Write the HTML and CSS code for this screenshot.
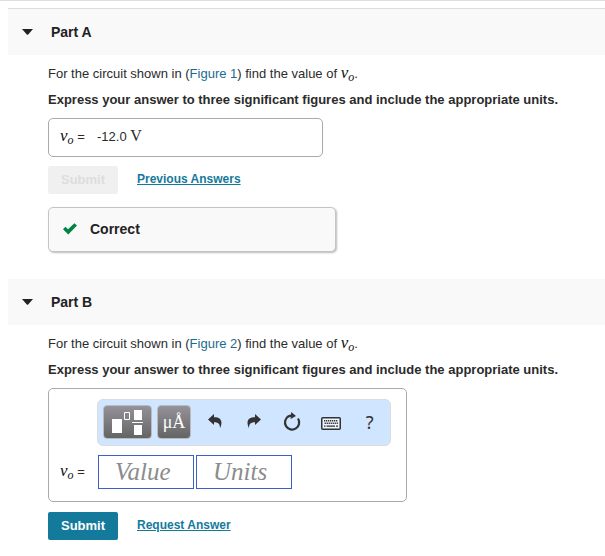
FILE: index.html
```html
<!DOCTYPE html>
<html lang="en">
<head>
<meta charset="utf-8">
<title>Circuit problem</title>
<link rel="stylesheet" href="styles.css">
</head>
<body>
<main class="problem">
  <section class="part">
    <h2 class="part-header part-header-first">
      <button class="toggle" type="button" aria-expanded="true">
        <svg class="caret" viewBox="0 0 11 6" aria-hidden="true"><path d="M0 0H11L6.2 5.5Q5.5 6 4.8 5.5Z"/></svg>
        <span>Part A</span>
      </button>
    </h2>
    <div class="part-body">
      <p class="line">For the circuit shown in (<a class="figure" href="#figure1">Figure 1</a>) find the value of <i class="var">v<sub>o</sub></i>.</p>
      <p class="line instruction">Express your answer to three significant figures and include the appropriate units.</p>
      <div class="answer answer-done">
        <span class="lhs"><i class="var">v<sub>o</sub></i> =</span>
        <span>-12.0 <span class="unit">V</span></span>
      </div>
      <div class="actions">
        <button class="submit" type="button" disabled>Submit</button>
        <a class="action-link" href="#previous">Previous Answers</a>
      </div>
      <div class="feedback">
        <svg class="check" viewBox="0 0 14 12" aria-hidden="true"><path d="M0 6.2L2.4 3.8 5 6.2 11.4 0.3 14 2.6 5.3 11.4Z"/></svg>
        <strong>Correct</strong>
      </div>
    </div>
  </section>

  <section class="part">
    <h2 class="part-header">
      <button class="toggle" type="button" aria-expanded="true">
        <svg class="caret" viewBox="0 0 11 6" aria-hidden="true"><path d="M0 0H11L6.2 5.5Q5.5 6 4.8 5.5Z"/></svg>
        <span>Part B</span>
      </button>
    </h2>
    <div class="part-body">
      <p class="line">For the circuit shown in (<a class="figure" href="#figure2">Figure 2</a>) find the value of <i class="var">v<sub>o</sub></i>.</p>
      <p class="line instruction">Express your answer to three significant figures and include the appropriate units.</p>
      <div class="answer answer-entry">
        <div class="toolbar" role="toolbar" aria-label="Equation tools">
          <button class="tool-dark tool-templates" type="button" aria-label="Templates">
            <svg width="32" height="26" viewBox="0 0 32 26" aria-hidden="true">
              <path fill="#fff" d="M0 10H10V24H0ZM22 1H30V11H22ZM22 16H30V26H22ZM20 13H31V14H20Z"/>
              <path fill="none" stroke="#fff" d="M12.5 3.5H17.5V10.5H12.5Z"/>
            </svg>
          </button>
          <button class="tool-dark tool-units" type="button" aria-label="Unit symbols">μÅ</button>
          <button class="tool" type="button" aria-label="Undo">
            <svg width="14" height="15" viewBox="0 0 14 15" aria-hidden="true"><path d="M0 5.5L6 0V3.3C11 3.3 14 5.2 13.4 10Q13 12.5 12 14.2C12 10.5 11 8.2 6 8.2V11Z"/></svg>
          </button>
          <button class="tool" type="button" aria-label="Redo">
            <svg width="14" height="15" viewBox="0 0 14 15" aria-hidden="true"><path d="M14 5.5L8 0V3.3C3 3.3 0 5.2 .6 10Q1 12.5 2 14.2C2 10.5 3 8.2 8 8.2V11Z"/></svg>
          </button>
          <button class="tool" type="button" aria-label="Reset">
            <svg width="18" height="20" viewBox="0 0 18 20" aria-hidden="true"><path fill="none" stroke="#333" stroke-width="2.2" d="M5.5 4.3A7.1 7.1 0 1 0 15 6.5M5.2 4.5Q7 3.3 10 3.7"/><path d="M8.2 0L13 4 7.6 7Z"/></svg>
          </button>
          <button class="tool" type="button" aria-label="Keyboard shortcuts">
            <svg class="keyboard" width="20" height="13" viewBox="0 0 20 13" aria-hidden="true"><rect x=".75" y=".75" width="18.5" height="11.5" rx="1" fill="#edf5ff" stroke="#333" stroke-width="1.5"/><path fill="none" stroke="#333" stroke-width="1.4" stroke-dasharray="1.3 .7" d="M3 3.7H17M3.6 6.3H17"/><path fill="none" stroke="#333" stroke-width="1.3" d="M3 9.2H4.5M5.5 9.2H14M15 9.2H17"/></svg>
          </button>
          <button class="tool tool-help" type="button" aria-label="Help">?</button>
        </div>
        <div class="entry">
          <span class="lhs"><i class="var">v<sub>o</sub></i> =</span>
          <span class="fields">
            <input class="field" type="text" placeholder="Value" aria-label="Value">
            <input class="field" type="text" placeholder="Units" aria-label="Units">
          </span>
        </div>
      </div>
      <div class="actions">
        <button class="submit" type="button">Submit</button>
        <a class="action-link" href="#request">Request Answer</a>
      </div>
    </div>
  </section>
</main>
</body>
</html>
```

FILE: styles.css
```css
* {
  box-sizing: border-box;
}

body {
  margin: 0;
  background: #fff;
  color: #2b2b2b;
  font: 13px/20px "Liberation Sans", Arial, sans-serif;
}

button,
input {
  margin: 0;
  padding: 0;
  border: 0;
  background: none;
  color: inherit;
  font: inherit;
}

svg {
  display: block;
  flex: none;
  fill: #333;
}

.problem {
  border-top: 1px solid #ddd;
  padding: 7px 0 0 8px;
}

.part-header {
  margin: 0;
  height: 46px;
  background: #f9f9f9;
  font-size: 14px;
}

.part-header-first {
  height: 47px;
  border-top: 1px solid #ddd;
}

.toggle {
  display: flex;
  align-items: center;
  gap: 18px;
  width: 100%;
  height: 100%;
  padding-left: 14px;
  color: #222;
  font-weight: bold;
}

.caret {
  width: 11px;
  height: 6px;
  fill: #222;
}

.part-body {
  padding: 9px 40px 27px;
}

.line {
  margin: 0 0 6px;
}

.instruction {
  margin-bottom: 8px;
  font-weight: bold;
  white-space: nowrap;
}

a {
  color: #147a9c;
}

.figure {
  color: #1b6b8f;
  text-decoration: none;
}

.var {
  color: #111;
  font-family: "Liberation Serif", serif;
  font-size: 17px;
  line-height: 1;
}

.var sub {
  font-size: 12px;
  line-height: 1;
  vertical-align: -3px;
}

.answer {
  border: 1px solid #aaa;
  border-radius: 5px;
}

.answer-done {
  display: flex;
  align-items: center;
  max-width: 275px;
  height: 39px;
  padding: 0 11px 2px;
}

.lhs {
  flex: none;
  width: 37px;
}

.unit {
  font: 16px/20px "Liberation Serif", serif;
}

.actions {
  display: flex;
  align-items: center;
  gap: 19px;
  margin-top: 9px;
}

.submit {
  width: 70px;
  height: 28px;
  border-radius: 2px;
  background: #147a9c;
  color: #fff;
  font-size: 13px;
  font-weight: bold;
}

.submit:disabled {
  background: #f0f0f0;
  color: #ddd;
}

.action-link {
  padding-bottom: 2px;
  font-size: 12px;
  font-weight: bold;
}

.feedback {
  display: flex;
  align-items: center;
  gap: 13px;
  max-width: 288px;
  height: 45px;
  margin-top: 13px;
  padding: 0 14px 2px;
  border: 1px solid #c4c4c4;
  border-radius: 5px;
  background: #f9f9f9;
  box-shadow: 1px 1px 2px #bbb;
  color: #222;
  font-size: 14px;
}

.check {
  width: 14px;
  height: 12px;
  fill: #008542;
}

.answer-entry {
  max-width: 359px;
  padding: 10px 15px 12px 11px;
}

.toolbar {
  display: flex;
  align-items: center;
  height: 47px;
  margin-left: 37px;
  padding: 0 1px 2px 5px;
  border: 1px solid #dcdcdc;
  border-radius: 6px;
  background: #d0e5ff;
}

.tool-dark {
  display: flex;
  align-items: center;
  justify-content: center;
  flex: none;
  height: 34px;
  margin-right: 5px;
  border: 1px solid #bbb;
  border-radius: 4px;
  background: linear-gradient(#94929a, #646464);
  color: #fff;
}

.tool-templates {
  width: 49px;
}

.tool-units {
  width: 34px;
  font: 18px/30px "Liberation Serif", serif;
}

.tool {
  display: flex;
  align-items: center;
  justify-content: center;
  flex: 1 1 38px;
  height: 34px;
}

.keyboard {
  margin-top: 4px;
}

.tool-help {
  color: #333;
  font: 18px/20px "Noto Sans", sans-serif;
}

.entry {
  display: flex;
  align-items: center;
  margin-top: 9px;
}

.fields {
  display: flex;
  gap: 2px;
  padding-left: 1px;
}

.field {
  width: 96px;
  height: 34px;
  padding: 0 16px;
  border: 1px solid #3b61c6;
  background: #fff;
  font: italic 25px/30px "Liberation Serif", serif;
}

.field::placeholder {
  color: #8c8c8c;
  opacity: 1;
}

.answer-entry + .actions {
  margin-top: 10px;
}
```
